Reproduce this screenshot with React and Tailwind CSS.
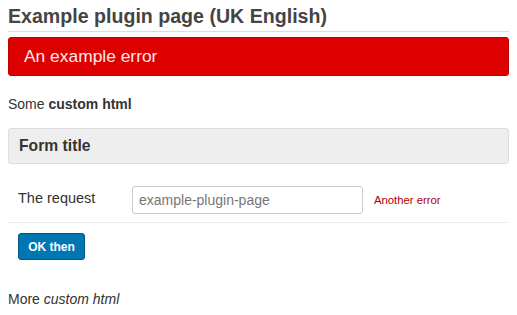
import React from "react";

export default function App() {
  return (
    <div className="min-h-screen bg-white px-2 text-[#333] font-['Liberation_Sans',Arial,sans-serif]">
      <h1 className="pt-[4px] pb-[3px] text-[19.6px] leading-[24px] font-bold text-[#444] border-b border-[#ddd]">
        Example plugin page (UK English)
      </h1>

      {/* Error banner */}
      <div className="mt-[5px] h-[39px] flex items-center rounded-[3px] bg-[#dd0000] border border-[#c00000] px-[15px] text-[17.4px] text-[#ffe6e6]">
        An example error
      </div>

      <p className="mt-[20px] text-[14px] leading-[16px]">
        Some <b>custom html</b>
      </p>

      {/* Form */}
      <div className="mt-[16px] h-[36px] flex items-center rounded-[3px] bg-[#eeeeee] border border-[#dddddd] px-[10px]">
        <h2 className="text-[15.7px] font-bold text-[#333]">Form title</h2>
      </div>

      <div className="mt-[22px] flex items-center border-b border-[#eeeeee] pb-[8px]">
        <label className="w-[124px] pl-[10px] text-[14.5px] text-[#333] -mt-[2px]">
          The request
        </label>
        <input
          className="w-[231px] h-[28px] rounded-[3px] border border-[#cccccc] px-[6px] text-[14px] text-[#777] outline-none"
          defaultValue="example-plugin-page"
        />
        <span className="ml-[11px] text-[11.3px] text-[#b00000]">Another error</span>
      </div>

      <button className="mt-[10px] ml-[10px] h-[27px] w-[67px] rounded-[3px] bg-[#0077b3] border border-[#005a87] text-[12px] font-bold text-white">
        OK then
      </button>

      <p className="mt-[31px] text-[14px] leading-[16px]">
        More <i>custom html</i>
      </p>
    </div>
  );
}
